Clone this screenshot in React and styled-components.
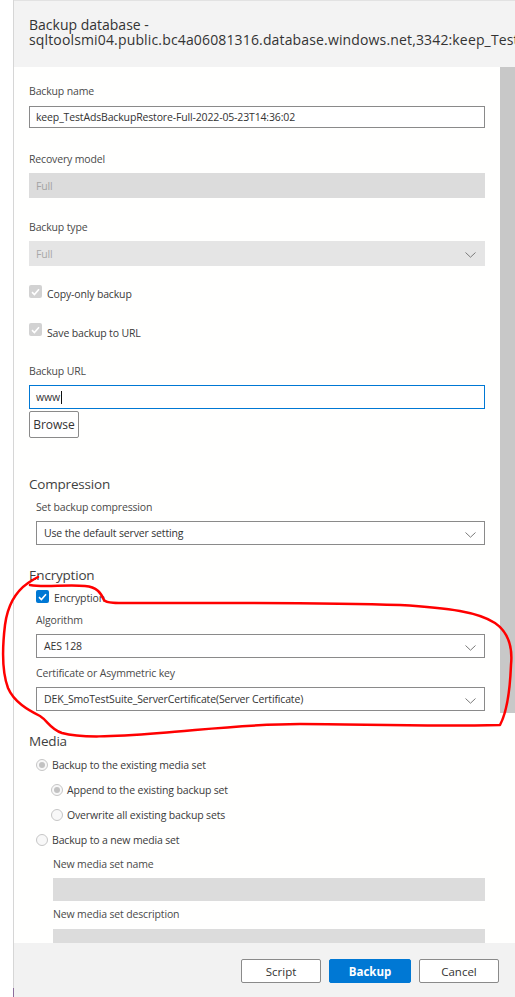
import React from "react";
import styled, { createGlobalStyle, css } from "styled-components";

const GlobalStyle = createGlobalStyle`
  html, body { margin: 0; padding: 0; background: #ffffff; }
  body { font-family: "Segoe UI", "Open Sans", "Noto Sans", sans-serif; color: #333; }
  * { box-sizing: border-box; }
`;

const Page = styled.div`
  position: relative;
  width: 515px;
  height: 997px;
  display: flex;
  overflow: hidden;
  background: #ffffff;
`;

const Gutter = styled.div`
  position: relative;
  flex: none;
  width: 14px;
  border-right: 1px solid #d6d6d6;
  background: #ffffff;
  &::after {
    content: "";
    position: absolute;
    right: -1px;
    bottom: 0;
    width: 1px;
    height: 9px;
    background: #8d6e9c;
  }
`;

const Dialog = styled.div`
  flex: 1;
  min-width: 0;
  display: flex;
  flex-direction: column;
`;

const Header = styled.div`
  flex: none;
  height: 67px;
  background: #f3f3f3;
  border-top: 1px solid #e2e2e2;
  padding: 16px 0 0 15px;
  font-size: 14px;
  line-height: 15px;
  color: #333333;
  white-space: nowrap;
  overflow: hidden;
`;

const HeaderLine = styled.div`
  letter-spacing: ${(p) => p.$ls || 0}px;
`;

const Body = styled.div`
  flex: 1;
  min-height: 0;
  display: flex;
  overflow: hidden;
  background: #fffffe;
`;

const Content = styled.div`
  flex: 1;
  min-width: 0;
  display: flex;
  flex-direction: column;
  padding: 17px 15px 0 15px;
  & > * {
    flex-shrink: 0;
  }
`;

const ScrollTrack = styled.div`
  flex: none;
  width: 15px;
`;

const ScrollThumb = styled.div`
  height: 646px;
  background: #c8c8c8;
`;

const Label = styled.div`
  margin-top: ${(p) => p.$mt || 0}px;
  margin-left: ${(p) => p.$indent || 0}px;
  font-size: 10.5px;
  line-height: 14px;
  letter-spacing: -0.15px;
  color: #4a4a4a;
  white-space: nowrap;
`;

const Heading = styled.div`
  margin-top: ${(p) => p.$mt || 0}px;
  font-size: 13.5px;
  line-height: 18px;
  letter-spacing: -0.2px;
  color: #3f3f3f;
`;

const fieldVariants = {
  input: css`
    background: #ffffff;
    border: 1px solid #8a8a8a;
    color: #333333;
  `,
  focus: css`
    background: #ffffff;
    border: 1px solid #0078d4;
    color: #333333;
  `,
  disabled: css`
    background: #dcdcdc;
    border: 1px solid #dcdcdc;
    color: #a3a3a3;
  `,
  disabledSelect: css`
    background: #e5e5e5;
    border: 1px solid #e5e5e5;
    color: #a8a8a8;
  `,
};

const Field = styled.div`
  margin-top: ${(p) => p.$mt || 0}px;
  margin-left: ${(p) => p.$indent || 0}px;
  height: ${(p) => p.$h || 24}px;
  display: flex;
  align-items: center;
  justify-content: space-between;
  padding: 0 8px 0 ${(p) => p.$pl || 6}px;
  font-size: 10.5px;
  letter-spacing: -0.15px;
  white-space: nowrap;
  ${(p) => fieldVariants[p.$variant || "input"]}
`;

const FieldText = styled.span`
  display: flex;
  align-items: center;
`;

const Caret = styled.span`
  display: inline-block;
  width: 1px;
  height: 13px;
  margin-left: 1px;
  background: #111111;
`;

const ChevronSvg = styled.svg`
  flex: none;
  margin-top: 3px;
`;

const Chevron = () => (
  <ChevronSvg width="11" height="6" viewBox="0 0 11 6">
    <path d="M0.5 0.5 L5.5 5.2 L10.5 0.5" fill="none" stroke="#7a7a7a" strokeWidth="1" />
  </ChevronSvg>
);

const BrowseButton = styled.button`
  align-self: flex-start;
  margin-top: 2px;
  width: 50px;
  height: 27px;
  padding: 0;
  border: 1px solid #8a8a8a;
  border-radius: 2px;
  background: #ffffff;
  font-family: inherit;
  font-size: 12px;
  color: #333333;
`;

const Row = styled.div`
  margin-top: ${(p) => p.$mt || 0}px;
  margin-left: ${(p) => p.$indent || 0}px;
  height: 16px;
  display: flex;
  align-items: ${(p) => (p.$radio ? "center" : "flex-start")};
  gap: ${(p) => (p.$radio ? 4 : 5)}px;
  font-size: 10.5px;
  line-height: 16px;
  letter-spacing: -0.15px;
  color: #3a3a3a;
  white-space: nowrap;
`;

const CheckText = styled.span`
  padding-top: ${(p) => p.$shift || 0}px;
`;

const CheckBox = styled.span`
  flex: none;
  width: 13px;
  height: 13px;
  border-radius: 2px;
  display: flex;
  align-items: center;
  justify-content: center;
  background: ${(p) => (p.$disabled ? "#d2d2d2" : "#0078d4")};
`;

const Check = ({ disabled }) => (
  <CheckBox $disabled={disabled}>
    <svg width="9" height="8" viewBox="0 0 9 8">
      <path d="M1 4.2 L3.4 6.5 L8 1.2" fill="none" stroke="#ffffff" strokeWidth="1.6" />
    </svg>
  </CheckBox>
);

const RadioCircle = styled.span`
  flex: none;
  position: relative;
  width: 12px;
  height: 12px;
  border-radius: 50%;
  border: 1px solid #c6c6c6;
  background: #f8f8f8;
  &::after {
    content: "";
    display: ${(p) => (p.$on ? "block" : "none")};
    position: absolute;
    left: 2px;
    top: 2px;
    width: 6px;
    height: 6px;
    border-radius: 50%;
    background: #c2c2c2;
  }
`;

const Footer = styled.div`
  flex: none;
  height: 54px;
  background: #f2f2f2;
  display: flex;
  justify-content: flex-end;
  align-items: flex-start;
  gap: 8px;
  padding: 16px 16px 0 0;
`;

const FooterButton = styled.button`
  width: ${(p) => p.$w || 80}px;
  height: 24px;
  padding: 0;
  border-radius: 2px;
  font-family: inherit;
  font-size: 11.5px;
  border: 1px solid ${(p) => (p.$primary ? "#0078d4" : "#8a8a8a")};
  background: ${(p) => (p.$primary ? "#0078d4" : "#ffffff")};
  color: ${(p) => (p.$primary ? "#ffffff" : "#333333")};
  font-weight: ${(p) => (p.$primary ? 700 : 400)};
`;

const Annotation = styled.svg`
  position: absolute;
  left: 0;
  top: 0;
  pointer-events: none;
`;

const Select = ({ children, ...rest }) => (
  <Field $variant="input" $pl={7} {...rest}>
    <FieldText>{children}</FieldText>
    <Chevron />
  </Field>
);

export default function App() {
  return (
    <>
      <GlobalStyle />
      <Page>
        <Gutter />
        <Dialog>
          <Header>
            <HeaderLine>Backup database -</HeaderLine>
            <HeaderLine $ls={0.15}>
              sqltoolsmi04.public.bc4a06081316.database.windows.net,3342:keep_TestAdsBackupRestore
            </HeaderLine>
          </Header>
          <Body>
            <Content>
              <Label>Backup name</Label>
              <Field $mt={8} $h={22}>
                <FieldText>keep_TestAdsBackupRestore-Full-2022-05-23T14:36:02</FieldText>
              </Field>

              <Label $mt={24}>Recovery model</Label>
              <Field $mt={7} $h={25} $variant="disabled">
                <FieldText>Full</FieldText>
              </Field>

              <Label $mt={22}>Backup type</Label>
              <Field $mt={7} $h={25} $variant="disabledSelect">
                <FieldText>Full</FieldText>
                <Chevron />
              </Field>

              <Row $mt={19}>
                <Check disabled />
                <CheckText $shift={1}>Copy-only backup</CheckText>
              </Row>
              <Row $mt={22}>
                <Check disabled />
                <CheckText $shift={2}>Save backup to URL</CheckText>
              </Row>

              <Label $mt={25}>Backup URL</Label>
              <Field $mt={7} $h={24} $variant="focus">
                <FieldText>
                  www
                  <Caret />
                </FieldText>
              </Field>
              <BrowseButton>Browse</BrowseButton>

              <Heading $mt={37}>Compression</Heading>
              <Label $mt={7} $indent={7}>Set backup compression</Label>
              <Select $mt={7} $indent={7}>Use the default server setting</Select>

              <Heading $mt={21}>Encryption</Heading>
              <Row $mt={6} $indent={7}>
                <Check />
                <CheckText>Encryption</CheckText>
              </Row>
              <Label $mt={7} $indent={7}>Algorithm</Label>
              <Select $mt={7} $indent={7}>AES 128</Select>
              <Label $mt={8} $indent={7}>Certificate or Asymmetric key</Label>
              <Select $mt={7} $indent={7}>DEK_SmoTestSuite_ServerCertificate(Server Certificate)</Select>

              <Heading $mt={21}>Media</Heading>
              <Row $radio $mt={7} $indent={7}>
                <RadioCircle $on />
                <span>Backup to the existing media set</span>
              </Row>
              <Row $radio $mt={9} $indent={22}>
                <RadioCircle $on />
                <span>Append to the existing backup set</span>
              </Row>
              <Row $radio $mt={9} $indent={22}>
                <RadioCircle />
                <span>Overwrite all existing backup sets</span>
              </Row>
              <Row $radio $mt={9} $indent={7}>
                <RadioCircle />
                <span>Backup to a new media set</span>
              </Row>
              <Label $mt={9} $indent={24}>New media set name</Label>
              <Field $mt={7} $h={23} $indent={24} $variant="disabled" />
              <Label $mt={6} $indent={24}>New media set description</Label>
              <Field $mt={8} $h={23} $indent={24} $variant="disabled" />
            </Content>
            <ScrollTrack>
              <ScrollThumb />
            </ScrollTrack>
          </Body>
          <Footer>
            <FooterButton $w={80}>Script</FooterButton>
            <FooterButton $w={82} $primary>Backup</FooterButton>
            <FooterButton $w={80}>Cancel</FooterButton>
          </Footer>
        </Dialog>
        <Annotation width="515" height="997" viewBox="0 0 515 997">
          <path
            d="M 38 577
               C 34 579, 31 581, 28 583
               C 18 590, 8 602, 5 625
               C 2 650, 2 672, 8 688
               C 14 702, 28 710, 40 716
               C 48 721, 50 729, 62 733
               C 80 738, 110 737, 160 733
               C 210 729, 250 724, 300 724
               C 360 724, 420 727, 500 725
               C 507 712, 510 690, 511 665
               C 513 645, 508 632, 495 623
               C 478 612, 450 608, 400 605
               C 320 602, 230 603, 150 603
               C 120 603, 107 604, 104 600
               C 101 593, 97 587, 85 586
               C 65 584, 45 588, 30 585"
            fill="none"
            stroke="#ff0000"
            strokeWidth="2.5"
            strokeLinecap="round"
            strokeLinejoin="round"
          />
        </Annotation>
      </Page>
    </>
  );
}
